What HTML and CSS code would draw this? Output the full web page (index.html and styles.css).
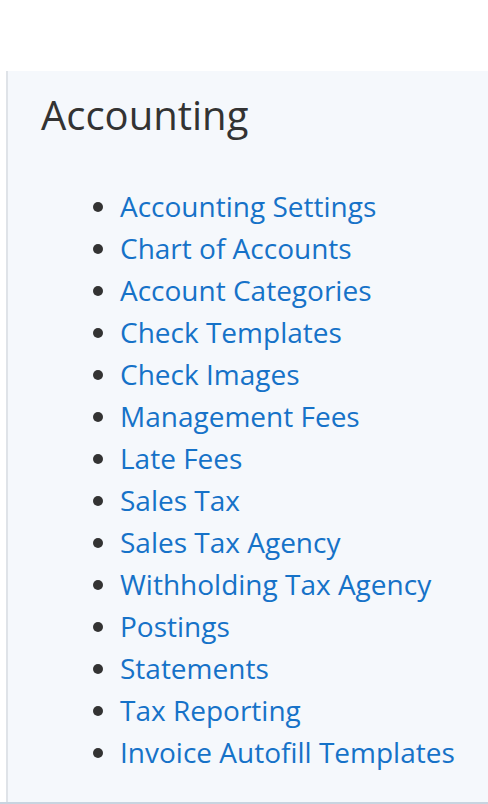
FILE: index.html
```html
<!DOCTYPE html>
<html>
<head>
<meta charset="utf-8">
<link rel="stylesheet" href="styles.css">
</head>
<body>
<div class="page">
  <section class="panel">
    <h1 class="title">Accounting</h1>
    <ul class="links">
      <li><a href="#">Accounting Settings</a></li>
      <li><a href="#">Chart of Accounts</a></li>
      <li><a href="#">Account Categories</a></li>
      <li><a href="#">Check Templates</a></li>
      <li><a href="#">Check Images</a></li>
      <li><a href="#">Management Fees</a></li>
      <li><a href="#">Late Fees</a></li>
      <li><a href="#">Sales Tax</a></li>
      <li><a href="#">Sales Tax Agency</a></li>
      <li><a href="#">Withholding Tax Agency</a></li>
      <li><a href="#">Postings</a></li>
      <li><a href="#">Statements</a></li>
      <li><a href="#">Tax Reporting</a></li>
      <li><a href="#">Invoice Autofill Templates</a></li>
    </ul>
  </section>
</div>
</body>
</html>
```
FILE: styles.css
```css
html, body {
  margin: 0;
  padding: 0;
  background: #ffffff;
}
body {
  font-family: "Open Sans", "Liberation Sans", sans-serif;
  color: #333333;
}
.page {
  padding-top: 71px;
  border-bottom: 2px solid #c8d4e0;
  height: 731px;
}
.panel {
  margin-left: 6px;
  border-left: 2px solid #dfe3e8;
  background: #f5f8fc;
  height: 731px;
  box-sizing: border-box;
  padding: 18px 0 0 33px;
}
.title {
  margin: 0;
  font-size: 40px;
  font-weight: 400;
  line-height: 52px;
  color: #333333;
}
.links {
  margin: 44px 0 0 0;
  padding-left: 79px;
  font-size: 28px;
  line-height: 42px;
  color: #333333;
}
.links a {
  color: #1672c8;
  text-decoration: none;
}
```
